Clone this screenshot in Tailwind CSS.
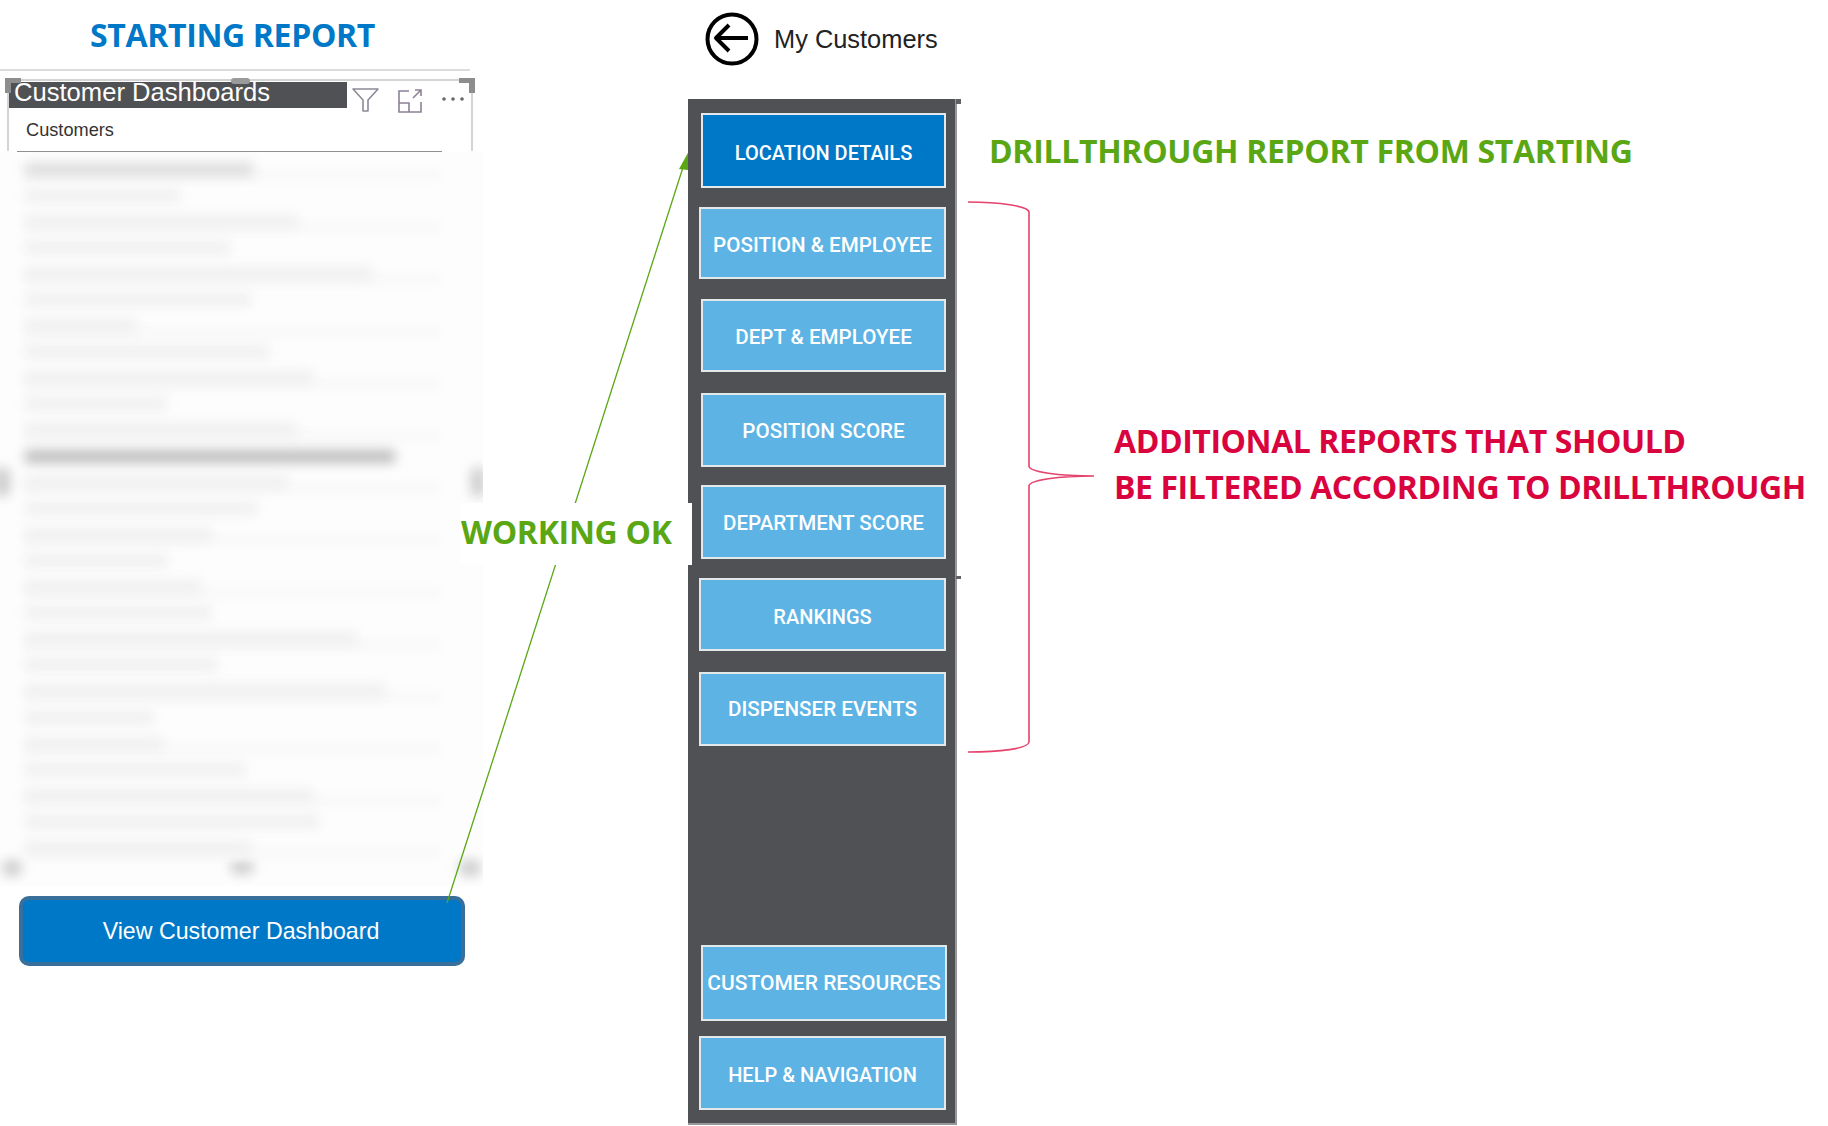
<!DOCTYPE html>
<html lang="en">
<head>
    <meta charset="UTF-8">
    <title>Drillthrough report</title>
    <script src="https://cdn.jsdelivr.net/npm/@tailwindcss/browser@4"></script>
</head>
<body class="bg-white">
    <div class="relative w-[1828px] h-[1126px] overflow-hidden flex font-['Liberation_Sans',sans-serif]">

        <!-- starting report -->
        <div class="w-[483px] shrink-0 flex flex-col">
            <h1 class="h-[69px] pt-[12px] pl-[90px] text-[32px] leading-[46px] tracking-[-0.35px] font-bold text-[#0078c8] font-['Open_Sans',sans-serif] whitespace-nowrap">STARTING REPORT</h1>
            <div class="h-[2px] w-[470px] bg-[#dcdcdc]"></div>
            <div class="relative h-[72px] ml-[7px] mr-[10px] mt-[8px] border-t-2 border-x-2 border-[#d4d4d4]">
                <div class="w-[338px] h-[26px] mt-[1px] bg-[#505155] text-white text-[25.6px] leading-[20px] pl-[5px] whitespace-nowrap">Customer Dashboards</div>
                <div class="pl-[17px] pt-[11px] text-[18.2px] leading-[22px] text-[#333]">Customers</div>
                <svg class="absolute left-[342px] top-[4px]" width="122" height="28" viewBox="0 0 122 28" fill="none">
                    <path d="M2 4 H27 L17 15 V26 H12 V15 Z" stroke="#8c8a96" stroke-width="1.6" stroke-linejoin="round"/>
                    <path d="M58 6 H48 V27 H70 V17 M48 18 H58 V27 M62 13 L70 5 M64 5 H70 V11" stroke="#8c8096" stroke-width="1.6"/>
                    <circle cx="93" cy="14" r="1.8" fill="#666"/><circle cx="102" cy="14" r="1.8" fill="#666"/><circle cx="111" cy="14" r="1.8" fill="#666"/>
                </svg>
                <div class="absolute -left-[4px] -top-[3px] w-[16px] h-[15px] border-t-[5px] border-l-[6px] border-[#8d8d8d]"></div>
                <div class="absolute left-[222px] -top-[3px] w-[19px] h-[6px] bg-[#9a9a9a] rounded-sm"></div>
                <div class="absolute -right-[4px] -top-[3px] w-[16px] h-[15px] border-t-[5px] border-r-[6px] border-[#8d8d8d]"></div>
            </div>
            <div class="h-[1px] w-[425px] ml-[17px] bg-[#8f8f8f]"></div>
            <div id="rows" class="relative h-[734px] bg-[#fdfdfd] pt-[4px] overflow-hidden">
                <div class="absolute left-[-6px] top-[315px] w-[16px] h-[30px] rounded-full bg-[#ccc] blur-[6px]"></div>
                <div class="absolute right-[-2px] top-[315px] w-[14px] h-[30px] rounded-full bg-[#ccc] blur-[6px]"></div>
                <div class="absolute left-[2px] top-[708px] w-[20px] h-[16px] rounded-full bg-[#ccc] blur-[6px]"></div>
                <div class="absolute left-[230px] top-[708px] w-[24px] h-[14px] rounded-full bg-[#ccc] blur-[6px]"></div>
                <div class="absolute right-[2px] top-[708px] w-[22px] h-[16px] rounded-full bg-[#ccc] blur-[6px]"></div>
            </div>
            <button class="mt-[10px] ml-[19px] w-[446px] h-[70px] pr-[2px] rounded-[10px] border-4 border-[#38709b] bg-[#0078c8] text-white text-[23.2px]">View Customer Dashboard</button>
        </div>

        <!-- drillthrough nav -->
        <div class="ml-[205px] w-[273px] shrink-0 flex flex-col">
            <div class="h-[99px] flex items-start pt-[12px] pl-[17px] gap-[15px]">
                <svg width="54" height="54" viewBox="0 0 54 54" fill="none" stroke="#000" stroke-width="4">
                    <circle cx="27" cy="27" r="24.5"/>
                    <path d="M43 26 H11 M24 13 L11 26 L24 39" stroke-linejoin="round"/>
                </svg>
                <span class="text-[25.4px] leading-[54px] text-[#222] whitespace-nowrap">My Customers</span>
            </div>
            <div class="relative z-10 h-[1026px] w-[269px] bg-[#505155] border-r-2 border-b-2 border-[#97979b] flex flex-col pt-[14px] font-['Roboto',sans-serif] font-medium text-[20.6px] text-white">
                <a class="ml-[13px] w-[245px] h-[75px] pt-[5px] text-[20px] flex items-center justify-center border-2 border-[#e3e8ea] bg-[#0078c8]">LOCATION DETAILS</a>
                <a class="ml-[11px] mt-[19px] w-[247px] h-[72px] pt-[4px] flex items-center justify-center border-2 border-[#e3e8ea] bg-[#5cb3e4]">POSITION &amp; EMPLOYEE</a>
                <a class="ml-[13px] mt-[20px] w-[245px] h-[73px] pt-[4px] flex items-center justify-center border-2 border-[#e3e8ea] bg-[#5cb3e4]">DEPT &amp; EMPLOYEE</a>
                <a class="ml-[13px] mt-[21px] w-[245px] h-[74px] pt-[3px] flex items-center justify-center border-2 border-[#e3e8ea] bg-[#5cb3e4]">POSITION SCORE</a>
                <a class="ml-[13px] mt-[18px] w-[245px] h-[74px] pt-[3px] flex items-center justify-center border-2 border-[#e3e8ea] bg-[#5cb3e4]">DEPARTMENT SCORE</a>
                <a class="ml-[11px] mt-[19px] w-[247px] h-[73px] pt-[5px] text-[20px] flex items-center justify-center border-2 border-[#e3e8ea] bg-[#5cb3e4]">RANKINGS</a>
                <a class="ml-[11px] mt-[21px] w-[247px] h-[74px] pt-[1px] flex items-center justify-center border-2 border-[#e3e8ea] bg-[#5cb3e4]">DISPENSER EVENTS</a>
                <a class="ml-[13px] mt-[199px] w-[246px] h-[76px] pt-[2px] text-[21px] flex items-center justify-center border-2 border-[#e3e8ea] bg-[#5cb3e4] whitespace-nowrap">CUSTOMER RESOURCES</a>
                <a class="ml-[11px] mt-[15px] w-[247px] h-[74px] pt-[3px] text-[20px] flex items-center justify-center border-2 border-[#e3e8ea] bg-[#5cb3e4]">HELP &amp; NAVIGATION</a>
                <div class="absolute -right-[6px] top-[0px] w-[5px] h-[5px] bg-[#606165]"></div>
                <div class="absolute -right-[6px] top-[477px] w-[5px] h-[3px] bg-[#606165]"></div>
            </div>
        </div>

        <!-- annotations -->
        <div class="ml-[28px] flex flex-col font-['Open_Sans',sans-serif] font-bold whitespace-nowrap">
            <p class="mt-[128px] text-[32px] leading-[46px] tracking-[-0.32px] text-[#5aa713]">DRILLTHROUGH REPORT FROM STARTING</p>
            <p class="mt-[244px] ml-[125px] text-[32px] leading-[46px] tracking-[-0.44px] text-[#d9043d]">ADDITIONAL REPORTS THAT SHOULD<br>BE FILTERED ACCORDING TO DRILLTHROUGH</p>
        </div>

        <!-- arrow and bracket drawn over the page -->
        <svg class="absolute left-0 top-0" width="1828" height="1126" viewBox="0 0 1828 1126" fill="none">
            <path d="M447 903 L686 158" stroke="#5aa713" stroke-width="1.3"/>
            <path d="M689 151 L679 169 L688 170 Z" fill="#5aa713"/>
            <path d="M968 202 C999 202 1028 206 1029 212 V466 C1029 472 1059 476 1094 476 C1059 476 1029 480 1029 486 V742 C1028 749 999 752 968 752" stroke="#e5426c" stroke-width="1.6"/>
        </svg>
        <div class="absolute left-[461px] top-[503px] w-[231px] h-[62px] pb-[4px] z-20 bg-white flex items-center font-['Open_Sans',sans-serif] font-bold text-[32px] tracking-[-0.3px] text-[#5aa713] whitespace-nowrap">WORKING OK</div>
    </div>

    <script>
        // customer rows are blurred in the report, only their lengths are kept
        const widths = [228, 155, 273, 205, 347, 226, 112, 244, 288, 142, 272, 370, 262, 232, 186, 142, 176, 186, 332, 192, 360, 128, 138, 220, 288, 294, 226];
        const rows = document.getElementById("rows");
        widths.forEach((width, index) => {
            const row = document.createElement("div");
            row.className = "relative h-[26.1px] ml-[25px] w-[415px] flex items-center";
            const band = index % 2 === 0 ? '<div class="absolute inset-x-0 top-[14px] h-[10px] bg-[#f8f8f8] blur-[4px]"></div>' : "";
            const colour = index === 11 ? "#bdbdbd" : index === 0 ? "#dcdcdc" : "#efefef";
            row.innerHTML = band + `<div class="relative h-[13px] blur-[6px]" style="width:${width}px;background:${colour}"></div>`;
            rows.appendChild(row);
        });
    </script>
</body>
</html>
